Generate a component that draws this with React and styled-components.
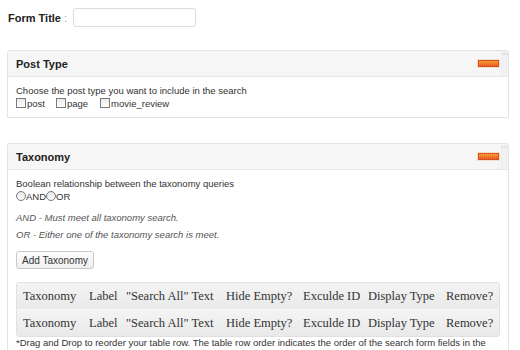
import styled, { createGlobalStyle } from 'styled-components';

const GlobalStyle = createGlobalStyle`
  body {
    margin: 0;
    background: #fff;
    font-family: "Liberation Sans", Arial, sans-serif;
    color: #333;
  }
`;

const Page = styled.div`
  width: 502px;
  padding: 8px 0 0 7px;
`;

const FormRow = styled.div`
  display: flex;
  align-items: center;
  padding-left: 1px;
`;

const FieldLabel = styled.span`
  font-size: 11px;
  font-weight: bold;
  color: #222;
`;

const Colon = styled.span`
  font-size: 11px;
  color: #999;
  margin-left: 3px;
`;

const TextInput = styled.input`
  box-sizing: border-box;
  width: 123px;
  height: 19px;
  margin-left: 6px;
  border: 1px solid #dcdcdc;
  border-radius: 3px;
  background: #fff;
  outline: none;
`;

const Panel = styled.section`
  margin-top: ${(p) => p.$gap}px;
  border: 1px solid #e3e3e3;
  border-radius: 3px 3px 0 0;
  background: #fff;
`;

const PanelHeader = styled.div`
  display: flex;
  align-items: center;
  height: 25px;
  padding-left: 8px;
  background: #f6f6f6;
  border-bottom: 1px solid #e6e6e6;
`;

const PanelTitle = styled.h3`
  flex: 1;
  margin: 0;
  font-size: 11px;
  font-weight: bold;
  color: #222;
`;

const Handle = styled.span`
  width: 19px;
  height: 5px;
  margin-right: 2px;
  border: 1px solid #d5501f;
  box-shadow: 0 0 0 1px #f8dccb;
  background: repeating-linear-gradient(90deg, rgba(255, 170, 80, 0.35) 0 1px, transparent 1px 2px),
    linear-gradient(#f99a2e, #f06d22 55%, #dc4a1c);
`;

const Grip = styled.span`
  align-self: stretch;
  width: 6px;
  border-left: 1px solid #ececec;
  background-image: radial-gradient(#d6d6d6 0.6px, transparent 0.8px);
  background-size: 2px 2px;
  background-repeat: repeat-x;
  background-position: 0 2px;
  background-color: #f1f1f1;
`;

const PanelBody = styled.div`
  padding: 7px 8px ${(p) => p.$bottom}px;
  font-size: 9.5px;
  line-height: 13px;
`;

const Line = styled.p`
  margin: ${(p) => p.$top || 0}px 0 0;
  font-style: ${(p) => (p.$italic ? 'italic' : 'normal')};
  color: ${(p) => (p.$italic ? '#555' : '#333')};
`;

const OptionRow = styled.div`
  display: flex;
  align-items: center;
  height: 12px;
`;

const Option = styled.label`
  display: flex;
  align-items: center;
  margin-right: ${(p) => p.$gap || 0}px;
`;

const CheckBox = styled.span`
  box-sizing: border-box;
  width: 10px;
  height: 10px;
  margin-right: 1px;
  border: 1px solid #7a7a7a;
  background: linear-gradient(#eaeaea, #fff);
`;

const Radio = styled.span`
  box-sizing: border-box;
  width: 10px;
  height: 10px;
  border: 1px solid #777;
  border-radius: 50%;
  background: linear-gradient(#e6e6e6, #fff);
`;

const Button = styled.button`
  display: block;
  box-sizing: border-box;
  margin-top: 10px;
  width: 78px;
  height: 18px;
  padding: 0;
  border: 1px solid #c8c8c8;
  border-radius: 3px;
  background: linear-gradient(#fefefe, #efefef);
  font-family: "Liberation Sans", Arial, sans-serif;
  font-size: 10px;
  color: #333;
`;

const Table = styled.div`
  margin-top: 13px;
  border: 1px solid #e0e0e0;
  border-radius: 3px;
  overflow: hidden;
`;

const Row = styled.div`
  display: grid;
  grid-template-columns: 66px 37px 100px 77px 65px 78px 1fr;
  align-items: center;
  height: 26px;
  padding-left: 6px;
  background: linear-gradient(#f4f4f4, #e9e9e9);
  border-top: ${(p) => (p.$first ? 'none' : '1px solid #fafafa')};
  font-family: "Liberation Serif", Georgia, serif;
  font-size: 12.5px;
  color: #333;
  white-space: nowrap;
`;

const Note = styled.p`
  margin: 0;
  font-size: 9.5px;
  line-height: 11px;
  color: #333;
`;

const columns = ['Taxonomy', 'Label', '"Search All" Text', 'Hide Empty?', 'Exculde ID', 'Display Type', 'Remove?'];

const PanelHead = ({ title }) => (
  <PanelHeader>
    <PanelTitle>{title}</PanelTitle>
    <Handle />
    <Grip />
  </PanelHeader>
);

export default function App() {
  return (
    <>
      <GlobalStyle />
      <Page>
        <FormRow>
          <FieldLabel>Form Title</FieldLabel>
          <Colon>:</Colon>
          <TextInput />
        </FormRow>

        <Panel $gap={23}>
          <PanelHead title="Post Type" />
          <PanelBody $bottom={8}>
            <Line>Choose the post type you want to include in the search</Line>
            <OptionRow>
              <Option $gap={11}><CheckBox />post</Option>
              <Option $gap={12}><CheckBox />page</Option>
              <Option><CheckBox />movie_review</Option>
            </OptionRow>
          </PanelBody>
        </Panel>

        <Panel $gap={25}>
          <PanelHead title="Taxonomy" />
          <PanelBody $bottom={20}>
            <Line>Boolean relationship between the taxonomy queries</Line>
            <OptionRow>
              <Option><Radio />AND</Option>
              <Option><Radio />OR</Option>
            </OptionRow>
            <Line $italic $top={9}>AND - Must meet all taxonomy search.</Line>
            <Line $italic $top={4}>OR - Either one of the taxonomy search is meet.</Line>
            <Button>Add Taxonomy</Button>
            <Table>
              {[0, 1].map((r) => (
                <Row key={r} $first={r === 0}>
                  {columns.map((c) => (
                    <span key={c}>{c}</span>
                  ))}
                </Row>
              ))}
            </Table>
            <Note>*Drag and Drop to reorder your table row. The table row order indicates the order of the search form fields in the frontend.</Note>
          </PanelBody>
        </Panel>
      </Page>
    </>
  );
}
